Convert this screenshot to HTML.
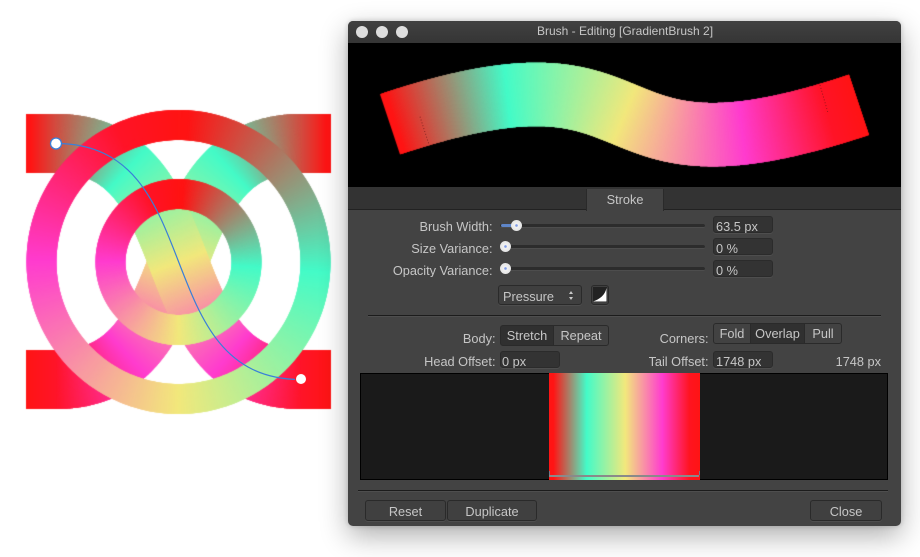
<!DOCTYPE html>
<html><head><meta charset="utf-8"><title>Brush</title>
<style>
html,body{margin:0;padding:0;width:920px;height:557px;overflow:hidden;background:#fff;font-family:"Liberation Sans",sans-serif;}
#page{position:absolute;left:0;top:0;width:920px;height:557px;overflow:hidden;background:#fff}
canvas,svg{position:absolute;left:0;top:0}
#win{position:absolute;left:348px;top:21px;width:553px;height:505px;background:#434343;border-radius:5px;box-shadow:0 10px 28px rgba(0,0,0,.32),0 0 6px rgba(0,0,0,.2);overflow:hidden}
.a{position:absolute;box-sizing:border-box}
.t{position:absolute;white-space:nowrap;height:16px;line-height:16px;font-size:12.75px;color:#c6c6c6;overflow:hidden}
.dot{position:absolute;width:12px;height:12px;border-radius:50%;background:#dedede;top:4.5px}
.track{position:absolute;left:500px;width:205px;height:3px;background:#2c2c2c;border-radius:2px;border-bottom:1px solid #4d4d4d;box-sizing:content-box}
.thumb{position:absolute;width:11px;height:11px;border-radius:50%;background:radial-gradient(circle,#7f9be8 0,#7f9be8 1px,#f2f2f2 1.6px,#dcdcdc 100%)}
.inp{position:absolute;box-sizing:border-box;background:#333;border:1px solid #2b2b2b;border-radius:3px;width:60px;height:17px;box-shadow:0 1px 0 #4e4e4e}
.btn{position:absolute;box-sizing:border-box;background:#404040;border:1px solid #2a2a2a;border-radius:3px;text-align:center;line-height:21px;font-size:12.75px;color:#c6c6c6;box-shadow:0 1px 0 #4e4e4e}
.seg{position:absolute;box-sizing:border-box;text-align:center;font-size:12.75px;color:#c6c6c6;border:1px solid #2a2a2a;line-height:20px}
</style></head>
<body>
<div id="page">
<canvas id="art" width="345" height="557"></canvas>
<svg width="345" height="557" viewBox="0 0 345 557" style="pointer-events:none">
<path d="M56 143.5C210 143.5 147 379.5 301 379.5" fill="none" stroke="#3a7fd8" stroke-width="1.2"/>
<circle cx="56" cy="143.5" r="5.5" fill="#fff" stroke="#3a7fd8" stroke-width="1.3"/>
<circle cx="301" cy="379" r="5.5" fill="#fff" stroke="#ff1a28" stroke-width="1"/>
</svg>
<div id="win">
<div class="a" style="left:0;top:0;width:553px;height:22px;background:linear-gradient(#414141,#353535)"></div>
<div class="dot" style="left:8px"></div><div class="dot" style="left:28px"></div><div class="dot" style="left:48px"></div>
<div class="t" style="left:0;width:553px;top:2px;text-align:center;font-size:12px"><span style="position:relative;left:0.5px">Brush - Editing [GradientBrush 2]</span></div>
<div class="a" style="left:0;top:22px;width:553px;height:144px;background:#000"></div>
<canvas id="prev" width="553" height="144" style="left:0;top:22px"></canvas>
<svg width="553" height="144" style="left:0;top:22px" viewBox="348 43 553 144">
<path d="M420 116.7L428.6 143.3M820 85L828 113" stroke="#5a1515" stroke-width="1" stroke-dasharray="1 2" fill="none" opacity=".6"/>
</svg>
<div class="a" style="left:0;top:166px;width:553px;height:23px;background:#333;border-bottom:1px solid #222"></div>
<div class="a" style="left:238px;top:168px;width:78px;height:22px;background:#434343;border-left:1px solid #2a2a2a;border-right:1px solid #2a2a2a"></div>
<div class="t" style="left:238px;width:78px;top:171px;text-align:center">Stroke</div>
</div>

<!-- controls, page coords -->
<div class="t" style="right:427.5px;top:219px">Brush Width:</div>
<div class="t" style="right:427.5px;top:241px">Size Variance:</div>
<div class="t" style="right:427.5px;top:263px;height:14px">Opacity Variance:</div>

<div class="track" style="top:223.5px"></div>
<div class="a" style="left:501px;top:224px;width:14px;height:3px;background:#5f86c8;border-radius:2px"></div>
<div class="thumb" style="left:511px;top:219.5px"></div>
<div class="track" style="top:245px"></div>
<div class="thumb" style="left:500px;top:241px"></div>
<div class="track" style="top:267px"></div>
<div class="thumb" style="left:500px;top:263px"></div>

<div class="inp" style="left:713px;top:216px"></div>
<div class="t" style="left:716px;top:218.5px;height:14px">63.5 px</div>
<div class="inp" style="left:713px;top:238px"></div>
<div class="t" style="left:716px;top:240.5px;height:14px">0 %</div>
<div class="inp" style="left:713px;top:260px"></div>
<div class="t" style="left:716px;top:262.5px;height:14px">0 %</div>

<div class="a" style="left:498px;top:285px;width:84px;height:20px;background:#3f3f3f;border:1px solid #2a2a2a;border-radius:3px;box-shadow:0 1px 0 #4e4e4e"></div>
<div class="t" style="left:503px;top:289px">Pressure</div>
<svg width="920" height="557" style="pointer-events:none">
<path d="M571 291l-2 3h4zM571 300l-2-3h4z" fill="#c9c9c9"/>
</svg>
<div class="a" style="left:591px;top:285px;width:18px;height:20px;background:#3f3f3f;border:1px solid #2a2a2a;border-radius:3px;box-shadow:0 1px 0 #4e4e4e"></div>
<div class="a" style="left:593px;top:287px;width:14px;height:15px;background:#222"></div>
<svg width="920" height="557" style="pointer-events:none"><path d="M593 301.5C600 299 605 295 606.5 288V301.5Z" fill="#fff"/></svg>

<div class="a" style="left:368px;top:315px;width:513px;height:1px;background:#1c1c1c"></div>
<div class="a" style="left:368px;top:316px;width:513px;height:1px;background:#4e4e4e"></div>

<div class="t" style="right:424.5px;top:331px">Body:</div>
<div class="seg" style="left:500px;top:325px;width:54px;height:21px;background:#303030;border-radius:3px 0 0 3px">Stretch</div>
<div class="seg" style="left:553px;top:325px;width:56px;height:21px;background:#424242;border-radius:0 3px 3px 0">Repeat</div>

<div class="t" style="right:211.5px;top:331px">Corners:</div>
<div class="seg" style="left:713px;top:323px;width:38px;height:21px;background:#424242;border-radius:3px 0 0 3px">Fold</div>
<div class="seg" style="left:750px;top:323px;width:55px;height:21px;background:#303030">Overlap</div>
<div class="seg" style="left:804px;top:323px;width:38px;height:21px;background:#424242;border-radius:0 3px 3px 0">Pull</div>

<div class="t" style="right:424.5px;top:354px">Head Offset:</div>
<div class="inp" style="left:500px;top:351px"></div>
<div class="t" style="left:502px;top:353.5px;height:14px">0 px</div>
<div class="t" style="right:211.5px;top:354px">Tail Offset:</div>
<div class="inp" style="left:713px;top:351px"></div>
<div class="t" style="left:716px;top:353.5px;height:14px">1748 px</div>
<div class="t" style="right:39px;top:354px">1748 px</div>

<div class="a" style="left:360px;top:373px;width:528px;height:107px;background:#1a1a1a;border:1px solid #000"></div>
<div class="a" style="left:548.5px;top:373px;width:151px;height:107px;background:linear-gradient(90deg,#ff1414 0%,#ff1414 3%,#44fbc8 25%,#f2e87c 50.5%,#ff3ccf 75%,#ff1420 93%,#ff1414 100%)"></div>
<div class="a" style="left:549px;top:475px;width:150px;height:1.5px;background:#8a8a8a"></div>
<div class="a" style="left:548.5px;top:471px;width:1px;height:4px;background:#778"></div>
<div class="a" style="left:698.5px;top:471px;width:1px;height:4px;background:#778"></div>

<div class="a" style="left:358px;top:490px;width:530px;height:1px;background:#1c1c1c"></div>
<div class="a" style="left:358px;top:491px;width:530px;height:1px;background:#4e4e4e"></div>

<div class="btn" style="left:365px;top:500px;width:81px;height:21px">Reset</div>
<div class="btn" style="left:447px;top:500px;width:90px;height:21px">Duplicate</div>
<div class="btn" style="left:810px;top:500px;width:72px;height:21px">Close</div>
</div>
<script>
(function(){
var S=[[0,[255,20,20]],[.01,[255,20,20]],[.25,[68,251,200]],[.5,[242,232,124]],[.75,[255,60,207]],[.93,[255,20,40]],[1,[255,20,20]]];
function col(t){t=Math.max(0,Math.min(1,t));for(var i=1;i<S.length;i++){if(t<=S[i][0]){var a=S[i-1],b=S[i],f=(t-a[0])/(b[0]-a[0]);return 'rgb('+[0,1,2].map(function(k){return Math.round(a[1][k]+(b[1][k]-a[1][k])*f)}).join(',')+')';}}return 'rgb(255,20,20)';}
function bez(p,n){var o=[];for(var i=0;i<=n;i++){var t=i/n,u=1-t,c=[u*u*u,3*u*u*t,3*u*t*t,t*t*t];o.push([c[0]*p[0][0]+c[1]*p[1][0]+c[2]*p[2][0]+c[3]*p[3][0],c[0]*p[0][1]+c[1]*p[1][1]+c[2]*p[2][1]+c[3]*p[3][1]]);}return o;}
function ribbon(ctx,pts,w){var L=[0];for(var i=1;i<pts.length;i++){L[i]=L[i-1]+Math.hypot(pts[i][0]-pts[i-1][0],pts[i][1]-pts[i-1][1]);}var T=L[L.length-1];ctx.lineWidth=w;ctx.lineCap='butt';for(i=0;i<pts.length-1;i++){var j=Math.min(pts.length-1,i+4);ctx.beginPath();ctx.moveTo(pts[i][0],pts[i][1]);for(var k=i+1;k<=j;k++)ctx.lineTo(pts[k][0],pts[k][1]);ctx.strokeStyle=col(L[i]/T);ctx.stroke();}}
var c=document.getElementById('art').getContext('2d');
var mid=bez([[56,143.5],[210,143.5],[147,379.5],[301,379.5]],500);
var pts=[];for(var x=26;x<56;x+=1)pts.push([x,143.5]);pts=pts.concat(mid);for(x=302;x<=331;x+=1)pts.push([x,379.5]);
ribbon(c,pts.map(function(p){return [357-p[0],p[1]]}),59);
ribbon(c,pts,59);
function rm(t){return t<.26?t*.25/.26:.25+(t-.26)*.25/.24;}
function ring(cx,cy,r,w){var n=720;c.lineWidth=w;c.lineCap='butt';for(var i=0;i<n;i++){var a=-Math.PI/2+i/n*2*Math.PI,t=i/n;c.beginPath();c.arc(cx,cy,r,a,a+2*Math.PI/n*3);c.strokeStyle=col(t<.5?rm(t):t);c.stroke();}}
ring(178.5,262,137,30);
ring(178.5,262,68,30);
var d=document.getElementById('prev').getContext('2d');
d.translate(-348,-43);
ribbon(d,bez([[390,124.3],[675,29.3],[574,199.8],[859,104.8]],700),63.5);
})();
</script>
</body></html>
